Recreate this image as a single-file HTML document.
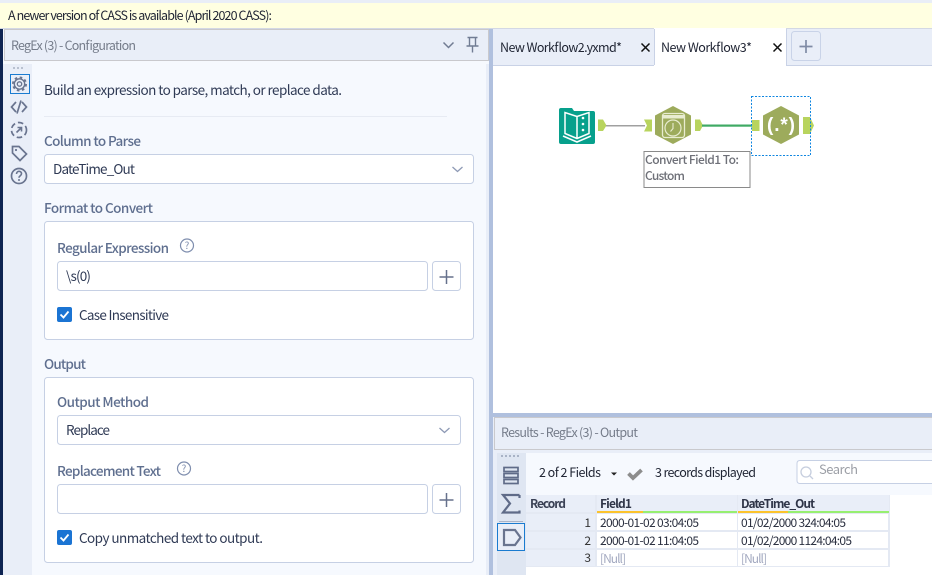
<!DOCTYPE html>
<html><head><meta charset="utf-8"><style>
html,body{margin:0;padding:0;width:932px;height:575px;overflow:hidden;background:#fff}
svg{display:block}
text{font-family:"Noto Sans CJK JP","Liberation Sans",sans-serif;white-space:pre}
.n{font-size:13.5px}
.lab{fill:#5f6f8f;font-weight:500}
.val{fill:#2f3a55}
.ui{font-size:12.5px;fill:#1f2433}
.ttl{font-size:12.5px;fill:#757c8a}
.box{fill:#fff;stroke:#c6d0e4;stroke-width:1}
.ic{fill:none;stroke:#69748f;stroke-width:1.6}
</style></head><body>
<svg width="932" height="575" viewBox="0 0 932 575" xmlns="http://www.w3.org/2000/svg">
<rect width="932" height="575" fill="#fff"/>
<rect width="932" height="3" fill="#e9eef7"/>
<rect y="3" width="932" height="25" fill="#ffffe1"/>
<rect y="28" width="932" height="1" fill="#d3d8e4"/>
<text x="8" y="20" class="ui" textLength="264">A newer version of CASS is available (April 2020 CASS):</text>

<!-- left panel -->
<rect x="0" y="29" width="493" height="546" fill="#f6f9fe"/>
<rect x="0" y="29" width="3" height="546" fill="#0e2452"/>
<rect x="4.500" y="29.500" width="484" height="31" fill="#e9eef8" stroke="#c9c9cd"/>
<rect x="3" y="64" width="29" height="511" fill="#e9eef8"/>
<rect x="486" y="64" width="3" height="511" fill="#e9eef8"/>
<rect x="489" y="29" width="4" height="546" fill="#b0c0de"/>
<text x="11" y="50" class="ttl" textLength="125">RegEx (3) - Configuration</text>
<path d="M443.500 42.500l5 5 5-5" fill="none" stroke="#717c93" stroke-width="1.500"/>
<path d="M467.500 37.500h10M469.500 37.500v8M475.500 37.500v8M466.500 46h12M472.500 46v6.500" fill="none" stroke="#717c93" stroke-width="1.400"/>

<!-- side icons -->
<g fill="#b9c1d0"><rect x="13" y="67" width="2" height="2"/><rect x="17" y="67" width="2" height="2"/><rect x="21" y="67" width="2" height="2"/></g>
<rect x="10.500" y="74.500" width="19" height="19" fill="#e9eef8" stroke="#1a7bd0"/>
<g class="ic">
<circle cx="19.500" cy="84" r="5.200" stroke-width="1.400"/>
<circle cx="19.500" cy="84" r="6.600" stroke-width="1.800" stroke-dasharray="2.600 2.580"/>
<circle cx="19.500" cy="84" r="2.200" stroke-width="1.300"/>
<path d="M16 102l-4.500 5 4.500 5M22 102l4.500 5-4.500 5M21 100.500l-4 13" stroke-width="1.700"/>
<circle cx="19" cy="130" r="7.500" stroke-dasharray="5.500 3" stroke-width="1.700"/>
<path d="M16.500 132.500l5-5M17.500 127.500h4v4"/>
<path d="M12.500 146.500h6.500l7.500 7.500-6.500 6.500-7.500-7.500z" stroke-width="1.700"/>
<circle cx="19" cy="176" r="7.500" stroke-width="1.700"/>
<path d="M16.500 174c0-3.500 5-3.500 5-.3 0 2-2.500 2-2.500 4"/>
</g>
<circle cx="16" cy="150" r="1.100" fill="#69748f"/>
<circle cx="19" cy="180" r="1" fill="#69748f"/>

<!-- form -->
<text x="44" y="95" class="n val" textLength="298">Build an expression to parse, match, or replace data.</text>
<rect x="44" y="116" width="403" height="1" fill="#e7ebf3"/>
<text x="44" y="146" class="n lab" textLength="97">Column to Parse</text>
<rect x="44.500" y="154.500" width="429" height="29" rx="3" class="box"/>
<text x="53" y="174" class="n val" textLength="82">DateTime_Out</text>
<path d="M452.500 167l5 4.500 5-4.500" fill="none" stroke="#8e9ab5" stroke-width="1.300"/>
<text x="44" y="213" class="n lab" textLength="109">Format to Convert</text>
<rect x="44.500" y="221.500" width="429" height="118" rx="3" class="box"/>
<text x="57" y="253" class="n lab" textLength="112">Regular Expression</text>
<circle cx="187" cy="245.500" r="6.500" fill="none" stroke="#7f8eae" stroke-width="1.200"/>
<text x="187" y="249" font-size="9.500" fill="#7f8eae" text-anchor="middle">?</text>
<rect x="57.500" y="261.500" width="370" height="29" rx="3" class="box"/>
<text x="66" y="281" class="n val" textLength="25">\s(0)</text>
<rect x="432.500" y="261.500" width="28" height="29" rx="3" class="box"/>
<path d="M446.500 270v14M439.500 277h14" stroke="#66718c" stroke-width="1.500"/>
<rect x="57" y="307" width="15" height="15" rx="2" fill="#1b74d3"/>
<path d="M60.500 314.500l3 3 5-6" fill="none" stroke="#fff" stroke-width="1.800"/>
<text x="79" y="320" class="n val" textLength="90">Case Insensitive</text>
<text x="44" y="369" class="n lab" textLength="42">Output</text>
<rect x="44.500" y="377.500" width="429" height="185" rx="3" class="box"/>
<text x="57" y="407" class="n lab" textLength="92">Output Method</text>
<rect x="57.500" y="415.500" width="403" height="29" rx="3" class="box"/>
<text x="66" y="435" class="n val" textLength="44">Replace</text>
<path d="M439.500 428l5 4.500 5-4.500" fill="none" stroke="#8e9ab5" stroke-width="1.300"/>
<text x="57" y="476" class="n lab" textLength="104">Replacement Text</text>
<circle cx="184" cy="468.500" r="6.500" fill="none" stroke="#7f8eae" stroke-width="1.200"/>
<text x="184" y="472" font-size="9.500" fill="#7f8eae" text-anchor="middle">?</text>
<rect x="57.500" y="484.500" width="370" height="29" rx="3" class="box"/>
<rect x="432.500" y="484.500" width="28" height="29" rx="3" class="box"/>
<path d="M446.500 493v14M439.500 500h14" stroke="#66718c" stroke-width="1.500"/>
<rect x="57" y="530" width="15" height="15" rx="2" fill="#1b74d3"/>
<path d="M60.500 537.500l3 3 5-6" fill="none" stroke="#fff" stroke-width="1.800"/>
<text x="79" y="543" class="n val" textLength="184">Copy unmatched text to output.</text>

<!-- tabs -->
<rect x="493" y="29" width="439" height="36" fill="#e9eef8"/>
<rect x="493" y="65" width="439" height="1" fill="#c9d2e6"/>
<rect x="654" y="28" width="132" height="38" fill="#fff"/>
<path d="M654.500 29v36M786.500 29v37" stroke="#c9d2e6"/>
<text x="500" y="52" class="ui" textLength="122">New Workflow2.yxmd*</text>
<path d="M641.500 43.500l8 8M649.500 43.500l-8 8" stroke="#111" stroke-width="1.500"/>
<text x="661" y="52" class="ui" textLength="91">New Workflow3*</text>
<path d="M773.500 43.500l8 8M781.500 43.500l-8 8" stroke="#111" stroke-width="1.500"/>
<rect x="791.500" y="31.500" width="29" height="29" rx="3" fill="#e9eef8" stroke="#c9d3e8"/>
<path d="M806 40v13M799.500 46.500h13" stroke="#7f8ba5" stroke-width="1.700"/>

<!-- canvas: input tool -->
<path d="M561 108h11l2 3 19 0q2 0 2 2v29q0 2-2 2h-32q-2 0-2-2v-32q0-2 2-2z" fill="#07a08c"/>
<path d="M577 116.500l-12-4v21l12 5 12-5v-21z M577 116.500v22" fill="none" stroke="#fff" stroke-width="1.500"/>
<path d="M563 136l14 6 14-6" fill="none" stroke="#fff" stroke-width="1.500"/>
<circle cx="583" cy="118" r="1.300" fill="#fff"/><circle cx="583" cy="124" r="1.300" fill="#fff"/><circle cx="583" cy="130" r="1.300" fill="#fff"/>
<path d="M598 119.500h5l3.500 6-3.500 5.500h-5z" fill="#b8d45e"/>
<rect x="606" y="125" width="39" height="1.500" fill="#a0a0a0"/>
<path d="M644 119.500h8v12h-8l3-6z" fill="#b8d45e"/>
<!-- datetime tool -->
<path d="M673 106l18 9.500v19l-18 9.500-18-9.500v-19z" fill="#9dab5c"/>
<rect x="662.500" y="113.500" width="22" height="24" rx="2.500" fill="none" stroke="#e8ecd0" stroke-width="1.300"/>
<rect x="662" y="115" width="23" height="3.500" fill="#e8ecd0"/>
<circle cx="673" cy="128" r="8" fill="none" stroke="#e8ecd0" stroke-width="1.200"/>
<path d="M673 123v5.500l-2.500 3" fill="none" stroke="#e8ecd0" stroke-width="1.100"/>
<path d="M695 119.500h5l3 6-3 5.500h-5z" fill="#b8d45e"/>
<rect x="702" y="124.500" width="51" height="2.200" fill="#3faa64"/>
<path d="M752 120h7.500v11H752z" fill="#b8d45e"/>
<!-- regex tool -->
<path d="M781 106l18 9.500v19l-18 9.500-18-9.500v-19z" fill="#9dab5c"/>
<text x="767" y="131" font-size="19" font-weight="bold" fill="#fff" textLength="28" style="font-family:'Liberation Sans',sans-serif">(.*)</text>
<path d="M803 117h7l4 8.500-4 8.500h-7z" fill="#b8d45e"/>
<rect x="751.500" y="96.500" width="59" height="59" fill="none" stroke="#0f86e0" stroke-dasharray="2 1.500"/>
<rect x="644" y="151.500" width="106" height="36" fill="#fff" stroke="#8a8a8a"/>
<text x="645" y="164" font-size="12" font-weight="500" fill="#6e7078" textLength="94">Convert Field1 To:</text>
<text x="645" y="180" font-size="12" font-weight="500" fill="#6e7078" textLength="40">Custom</text>

<!-- results -->
<rect x="493" y="413" width="439" height="4" fill="#b0c0de"/>
<rect x="493" y="417" width="439" height="158" fill="#e9eef8"/>
<rect x="494.500" y="417.500" width="440" height="32" fill="#e9eef8" stroke="#c9c9cd"/>
<text x="501" y="437" class="ttl" textLength="137">Results - RegEx (3) - Output</text>
<rect x="497" y="453" width="29" height="122" fill="#dfe6f2"/>
<rect x="526" y="453" width="406" height="122" fill="#fff"/>
<rect x="526" y="453" width="406" height="42" fill="#f6f9fe"/>
<g fill="#a9b3c6"><rect x="501" y="455" width="2" height="2"/><rect x="505" y="455" width="2" height="2"/><rect x="509" y="455" width="2" height="2"/><rect x="513" y="455" width="2" height="2"/><rect x="517" y="455" width="2" height="2"/></g>
<g fill="none" stroke="#5f6b88" stroke-width="1.700">
<rect x="504" y="467.500" width="14" height="4"/><rect x="504" y="473.500" width="14" height="4"/><rect x="504" y="479.500" width="14" height="4"/>
<path d="M519.500 495h-16.500l7 8.500-7 9h16.500v-2M519.500 495v3" stroke-width="2.200"/>
</g>
<rect x="499" y="521" width="24" height="1" fill="#aab4c8"/>
<rect x="497.500" y="523.500" width="27" height="27" fill="#e9eef8" stroke="#1a7bd0"/>
<path d="M504 530h11l5.500 7.500-5.500 7.500h-11z" fill="none" stroke="#69748f" stroke-width="2.200"/>

<text x="539" y="477" class="ui" textLength="62">2 of 2 Fields</text>
<path d="M611 472.500h6l-3 3z" fill="#222"/>
<path d="M628.500 473.500l4.500 4.500 8.500-8" fill="none" stroke="#8d8d8d" stroke-width="3.800"/>
<text x="655" y="477" class="ui" textLength="101">3 records displayed</text>
<path d="M932 460.500h-132q-3 0-3 3v17q0 3 3 3h132" fill="#fff" stroke="#c6d0e4"/>
<circle cx="806" cy="472" r="5" fill="none" stroke="#c6cede" stroke-width="1.300"/>
<path d="M810 476l3 3" stroke="#c6cede" stroke-width="1.300"/>
<text x="819" y="474" font-size="13" fill="#9c9fa6" textLength="39">Search</text>

<!-- table -->
<rect x="526" y="495" width="364" height="72" fill="#e4e9f3"/>
<rect x="526" y="495" width="69" height="17" fill="#e9eef8"/>
<rect x="597" y="495" width="140" height="17" fill="#e9eef8"/>
<rect x="738" y="495" width="151" height="17" fill="#e9eef8"/>
<rect x="597" y="511" width="46" height="2" fill="#fcc32c"/><rect x="643" y="511" width="94" height="2" fill="#97ef70"/>
<rect x="738" y="511" width="50" height="2" fill="#fcc32c"/><rect x="788" y="511" width="101" height="2" fill="#97ef70"/>
<rect x="526" y="514" width="69" height="16" fill="#e9eef8"/><rect x="526" y="532" width="69" height="16" fill="#e9eef8"/><rect x="526" y="550" width="69" height="16" fill="#e9eef8"/>
<g fill="#fff">
<rect x="597" y="514" width="140" height="16"/><rect x="738" y="514" width="150" height="16"/>
<rect x="597" y="532" width="140" height="16"/><rect x="738" y="532" width="150" height="16"/>
<rect x="597" y="550" width="140" height="16"/><rect x="738" y="550" width="150" height="16"/>
</g>
<g font-size="12">
<text x="530" y="508" font-weight="bold" fill="#3b4256" textLength="36">Record</text>
<text x="600" y="508" font-weight="bold" fill="#2f3548" textLength="32">Field1</text>
<text x="741" y="508" font-weight="bold" fill="#2f3548" textLength="74">DateTime_Out</text>
<text x="591" y="527" fill="#333" text-anchor="end">1</text>
<text x="591" y="545" fill="#333" text-anchor="end">2</text>
<text x="591" y="562" fill="#333" text-anchor="end">3</text>
<text x="600" y="527" fill="#2b3040" textLength="99">2000-01-02 03:04:05</text>
<text x="600" y="545" fill="#2b3040" textLength="99">2000-01-02 11:04:05</text>
<text x="600" y="563" fill="#a3a9c0" textLength="26">[Null]</text>
<text x="741" y="527" fill="#2b3040" textLength="105">01/02/2000 324:04:05</text>
<text x="741" y="545" fill="#2b3040" textLength="111">01/02/2000 1124:04:05</text>
<text x="741" y="563" fill="#a3a9c0" textLength="26">[Null]</text>
</g>
</svg>
</body></html>
